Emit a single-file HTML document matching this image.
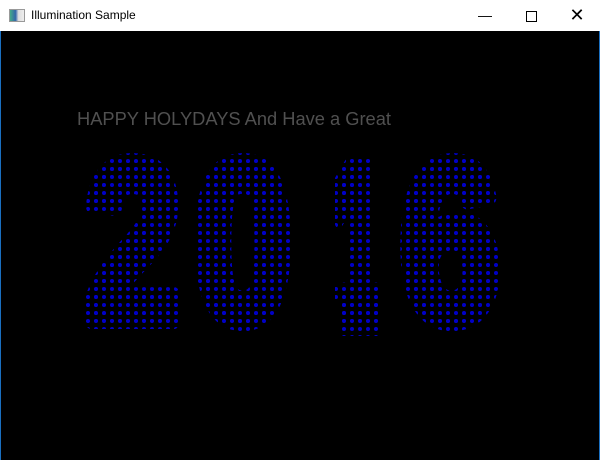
<!DOCTYPE html>
<html><head><style>
html,body{margin:0;padding:0;width:600px;height:460px;overflow:hidden;background:#000;font-family:"Liberation Sans",sans-serif}
.tb{position:absolute;left:0;top:0;width:600px;height:31px;background:#fff;border-bottom:0}
.t{position:absolute;left:31px;top:8px;font-size:12px;color:#000}
.ic{position:absolute;left:9px;top:9px;width:14px;height:11px;border:1px solid #999;background:linear-gradient(90deg,#4a8 0,#36a 40%,#ddd 60%,#eee 100%)}
.b{position:absolute;top:0;height:31px;width:46px;text-align:center;line-height:31px;font-size:14px;color:#000}
.h{position:absolute;left:77px;top:108px;font-size:18.3px;color:#505050;white-space:nowrap}
.edge{position:absolute;top:31px;width:1px;height:429px;background:#1a6fc0}
</style></head><body>
<div class="tb"><div class="ic"></div><div class="t">Illumination Sample</div>
<div class="b" style="left:462px">&#8212;</div>
<div class="b" style="left:508px"><span style="display:inline-block;width:9px;height:9px;border:1px solid #000;vertical-align:middle"></span></div>
<div class="b" style="left:554px;font-size:18px">&#10005;</div></div>
<div class="edge" style="left:0"></div><div class="edge" style="right:0"></div>
<div class="h">HAPPY HOLYDAYS And Have a Great</div>
<svg width="600" height="460" style="position:absolute;left:0;top:0">
<defs><pattern id="p" x="84" y="149" width="8" height="8" patternUnits="userSpaceOnUse">
<circle cx="4" cy="4" r="2" fill="#0000c8"/></pattern>
<clipPath id="c1"><rect x="335" y="156" width="44" height="144"/><rect x="342" y="299" width="37" height="40"/></clipPath></defs>
<g font-family="Liberation Sans" font-weight="bold" font-size="229" fill="url(#p)" stroke="url(#p)" stroke-width="16" stroke-linejoin="round">
<text x="85" y="321" textLength="96" lengthAdjust="spacingAndGlyphs">2</text>
<text x="194" y="321" textLength="98" lengthAdjust="spacingAndGlyphs">0</text>
<text x="333" y="321" textLength="48" lengthAdjust="spacingAndGlyphs" clip-path="url(#c1)" stroke-width="30">1</text>
<text x="400" y="321" textLength="100" lengthAdjust="spacingAndGlyphs">6</text>
</g></svg>
</body></html>
